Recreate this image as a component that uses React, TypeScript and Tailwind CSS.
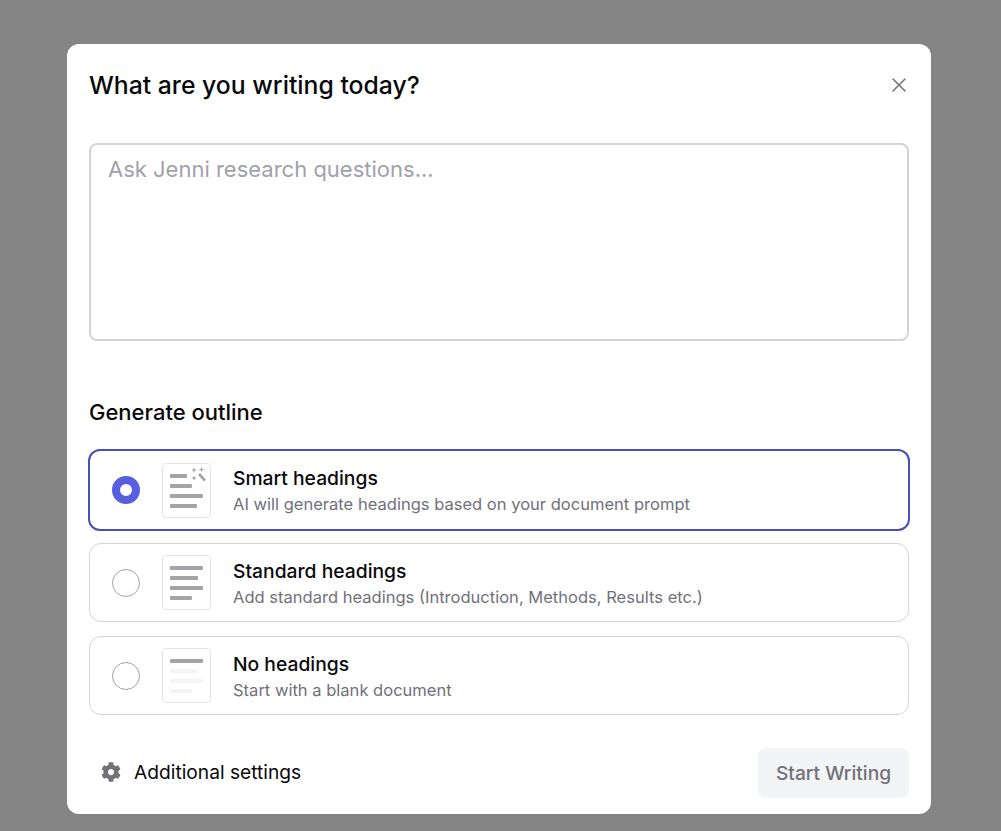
import { X } from 'lucide-react';
import { FaCog } from 'react-icons/fa';

const options = [
  { id: 'smart', title: 'Smart headings', desc: 'AI will generate headings based on your document prompt' },
  { id: 'standard', title: 'Standard headings', desc: 'Add standard headings (Introduction, Methods, Results etc.)' },
  { id: 'none', title: 'No headings', desc: 'Start with a blank document' },
];

function HeadingIcon({ kind }: { kind: string }) {
  const bars =
    kind === 'smart'
      ? [
          { w: 'w-[17px]', c: 'bg-[#a3a3a8]' },
          { w: 'w-[22px]', c: 'bg-[#a3a3a8]' },
          { w: 'w-[33px]', c: 'bg-[#a3a3a8]' },
          { w: 'w-[27px]', c: 'bg-[#a3a3a8]' },
        ]
      : kind === 'standard'
        ? [
            { w: 'w-[33px]', c: 'bg-[#a3a3a8]' },
            { w: 'w-[28px]', c: 'bg-[#a3a3a8]' },
            { w: 'w-[33px]', c: 'bg-[#a3a3a8]' },
            { w: 'w-[22px]', c: 'bg-[#a3a3a8]' },
          ]
        : [
            { w: 'w-[33px]', c: 'bg-[#a3a3a8]' },
            { w: 'w-[27px]', c: 'bg-[#f4f4f5]' },
            { w: 'w-[33px]', c: 'bg-[#f4f4f5]' },
            { w: 'w-[22px]', c: 'bg-[#f4f4f5]' },
          ];
  return (
    <div className="relative flex h-[55px] w-[49px] shrink-0 flex-col gap-[6px] rounded-[4px] border border-[#e4e4e7] bg-white pl-[7px] pt-[10px]">
      {bars.map((b, i) => (
        <div key={i} className={`h-[4px] rounded-[1px] ${b.w} ${b.c}`} />
      ))}
      {kind === 'smart' && (
        <svg className="absolute right-[4px] top-[3px]" width="15" height="15" viewBox="0 0 15 15" fill="none">
          <path d="M8 7l6 6.5" stroke="#a3a3a8" strokeWidth="2.6" />
          <path d="M3 1v4M1 3h4M10.5 0.5v4M8.5 2.5h4M3 9v4M1 11h4" stroke="#a3a3a8" strokeWidth="1.1" />
        </svg>
      )}
    </div>
  );
}

function Option({ id, title, desc }: { id: string; title: string; desc: string }) {
  const selected = id === 'smart';
  return (
    <div
      className={
        selected
          ? '-mx-px mb-[-2px] flex h-[82px] items-center rounded-[12px] border-2 border-[#4650b8] bg-white pl-[22px]'
          : 'flex h-[79px] items-center rounded-[12px] border border-[#d4d4d8] bg-white pl-[22px]'
      }
    >
      {selected ? (
        <div className="h-[28px] w-[28px] shrink-0 rounded-full border-[8px] border-[#575ee0] bg-white" />
      ) : (
        <div className="h-[28px] w-[28px] shrink-0 rounded-full border border-[#a1a1aa] bg-white" />
      )}
      <div className="ml-[22px]">
        <HeadingIcon kind={id} />
      </div>
      <div className="ml-[22px] pt-[2px]">
        <div className="text-[19.3px] font-medium leading-[26px] text-[#09090b]">{title}</div>
        <div className="text-[16.55px] leading-[26px] text-[#71717a]">{desc}</div>
      </div>
    </div>
  );
}

export default function App() {
  return (
    <div className="flex h-[831px] w-full justify-center overflow-hidden bg-[#858585] pr-[3px] pt-[44px] font-['Inter',sans-serif]">
      <div className="flex h-[770px] w-[864px] flex-col rounded-[12px] bg-white px-[22px]">
        <div className="flex h-[82px] items-center justify-between">
          <h1 className="pt-[2px] text-[24.75px] font-medium text-[#09090b]">What are you writing today?</h1>
          <X size={24} strokeWidth={1.5} className="-mr-[2px] text-[#71717a]" />
        </div>
        <textarea
          placeholder="Ask Jenni research questions..."
          className="mt-[17px] h-[198px] w-full resize-none rounded-[8px] border-2 border-[#d4d4d8] px-[17px] py-[9px] text-[22px] leading-[30px] outline-none placeholder:text-[#a1a1aa]"
        />
        <h2 className="mt-[57px] text-[22px] font-medium leading-[28px] text-[#09090b]">Generate outline</h2>
        <div className="mt-[23px] flex flex-col gap-[14px]">
          {options.map((o) => (
            <Option key={o.id} {...o} />
          ))}
        </div>
        <div className="mt-[33px] flex items-center justify-between pl-[12px]">
          <div className="-mt-[2px] flex items-center gap-[13px]">
            <FaCog size={20} className="text-[#71717a]" />
            <span className="text-[19.2px] text-[#09090b]">Additional settings</span>
          </div>
          <button className="h-[50px] w-[151px] rounded-[8px] bg-[#f3f4f6] text-[19.2px] font-medium text-[#71717a]">Start Writing</button>
        </div>
      </div>
    </div>
  );
}
